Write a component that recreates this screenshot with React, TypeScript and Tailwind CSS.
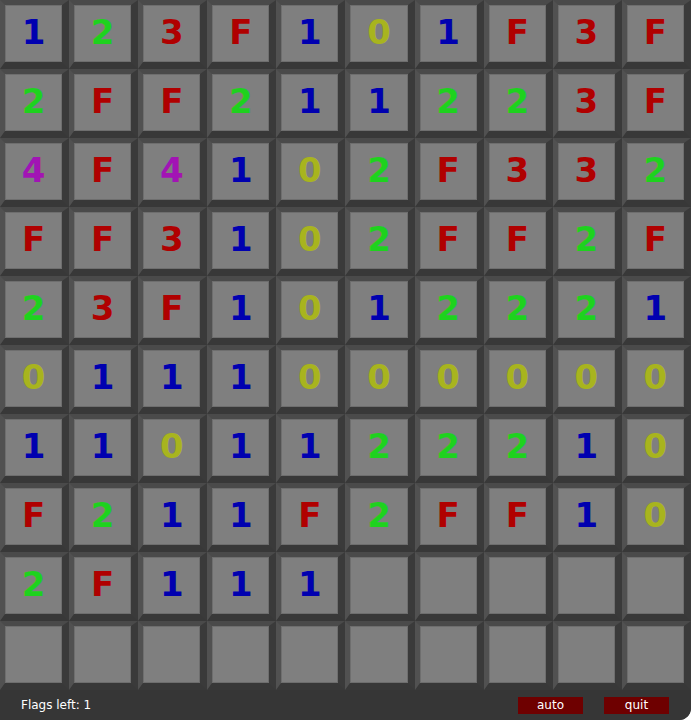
const BOARD = [
  '123F101F3F',
  '2FF211223F',
  '4F4102F332',
  'FF3102FF2F',
  '23F1012221',
  '0111000000',
  '1101122210',
  'F211F2FF10',
  '2F111     ',
  '          ',
]

const COLORS: Record<string, string> = {
  '0': 'text-[#a8b41e]',
  '1': 'text-[#0000b0]',
  '2': 'text-[#1ed21e]',
  '3': 'text-[#b00000]',
  '4': 'text-[#a214b4]',
  F: 'text-[#b00000]',
}

function Cell({ value }: { value: string }) {
  return (
    <div className="h-[69px] border-t-[5px] border-l-[5px] border-r-[7px] border-b-[7px] border-t-[#4a4a4a] border-l-[#515151] border-r-[#3a3a3a] border-b-[#383838]">
      <div className="flex h-full w-full items-center justify-center border border-[#6e6e6e] bg-[#7f7f7f] pb-[3px]">
        {value !== ' ' && (
          <span
            className={`text-[34px] leading-none font-bold ${COLORS[value]}`}
            style={{ fontFamily: '"DejaVu Sans", Verdana, sans-serif' }}
          >
            {value}
          </span>
        )}
      </div>
    </div>
  )
}

export default function App() {
  return (
    <div
      className="w-[691px] h-[720px] overflow-hidden bg-[#3a3a3a] rounded-br-[12px]"
      style={{ fontFamily: '"DejaVu Sans", Verdana, sans-serif' }}
    >
      <div className="grid grid-cols-10">
        {BOARD.flatMap((row, r) =>
          row.split('').map((v, c) => <Cell key={`${r}-${c}`} value={v} />)
        )}
      </div>

      {/* Footer */}
      <div className="flex h-[30px] items-center bg-[#363636] pl-[21px] pr-[22px] text-white">
        <span className="text-[12px]">Flags left: 1</span>
        <div className="ml-auto flex gap-[21px]">
          <button className="h-[17px] w-[65px] bg-[#6e0000] text-[12px] leading-none text-white">
            auto
          </button>
          <button className="h-[17px] w-[65px] bg-[#6e0000] text-[12px] leading-none text-white">
            quit
          </button>
        </div>
      </div>
    </div>
  )
}
